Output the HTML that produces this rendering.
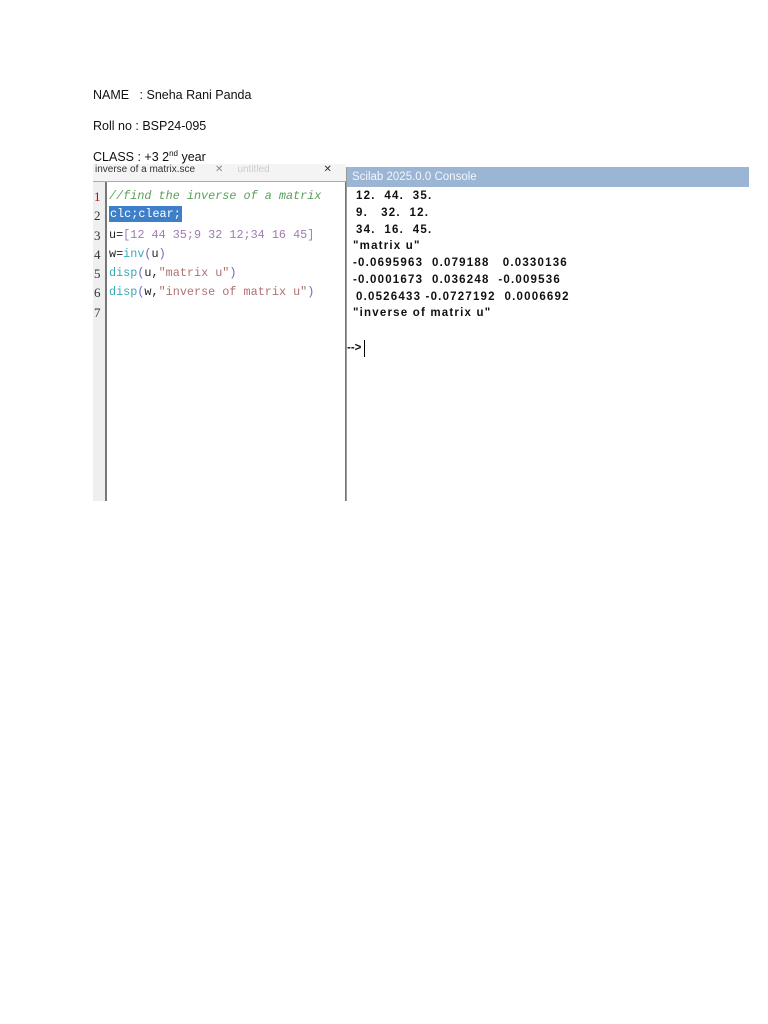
<!DOCTYPE html>
<html><head><meta charset="utf-8"><style>
body{margin:0;width:768px;height:1024px;background:#fff;position:relative;overflow:hidden;font-family:"Liberation Sans",sans-serif;}
.t{position:absolute;left:93px;font-size:12.5px;color:#111;}
.ed{position:absolute;left:93px;top:164px;width:253px;height:337px;background:#fff;}
.tabs{position:absolute;left:0;top:0;width:253px;height:17px;background:#f4f4f4;border-bottom:1px solid #aaa;font-size:10px;color:#333;overflow:hidden;white-space:nowrap;}
.gut{position:absolute;left:0;top:18px;width:12px;height:319px;background:#efefef;border-right:2px solid #777;}
.ln{position:absolute;left:1px;font-family:"Liberation Serif",serif;font-size:13px;color:#333;}
.code{position:absolute;left:16px;font-family:"Liberation Mono",monospace;font-size:11.8px;white-space:pre;color:#222;}
.rb{position:absolute;left:252px;top:18px;width:2px;height:319px;background:#777;}
.con{position:absolute;left:346px;top:167px;width:402px;height:334px;border-left:1px solid #999;}
.ch{height:20px;background:#9bb5d5;color:#f4f6fa;font-size:11.5px;line-height:20px;padding-left:5px;}
.co{position:absolute;left:6px;font-size:11.5px;letter-spacing:1.2px;font-weight:bold;color:#111;white-space:pre;}
</style></head><body>
<div class="t" style="top:88px">NAME&nbsp;&nbsp; : Sneha Rani Panda</div>
<div class="t" style="top:119px">Roll no : BSP24-095</div>
<div class="t" style="top:149px">CLASS : +3 2<sup style="font-size:8px">nd</sup> year</div>

<div class="ed">
<div class="tabs"><span style="margin-left:2px;">inverse of a matrix.sce</span><span style="margin-left:20px;color:#888">&#x2715;</span><span style="display:inline-block;width:70px;margin-left:14px;color:#ccc">untitled</span><span style="margin-left:16px">&#x2715;</span></div>
<div class="gut"></div>
<div class="rb"></div>
<div class="ln" style="top:25px;color:#c00">1</div>
<div class="ln" style="top:44px">2</div>
<div class="ln" style="top:64px">3</div>
<div class="ln" style="top:83px">4</div>
<div class="ln" style="top:102px">5</div>
<div class="ln" style="top:121px">6</div>
<div class="ln" style="top:141px">7</div>
<div class="code" style="top:25px;color:#5aa05a;font-style:italic">//find the inverse of a matrix</div>
<div class="code" style="top:42px;background:#3d7fc9;color:#fff;padding:1px 1px;">clc;clear;</div>
<div class="code" style="top:64px">u=<span style="color:#a07bb0">[12 44 35;9 32 12;34 16 45]</span></div>
<div class="code" style="top:83px">w=<span style="color:#3aa8b8">inv</span><span style="color:#6a6ac0">(</span>u<span style="color:#6a6ac0">)</span></div>
<div class="code" style="top:102px"><span style="color:#3aa8b8">disp</span><span style="color:#6a6ac0">(</span>u,<span style="color:#b07070">"matrix u"</span><span style="color:#6a6ac0">)</span></div>
<div class="code" style="top:121px"><span style="color:#3aa8b8">disp</span><span style="color:#6a6ac0">(</span>w,<span style="color:#b07070">"inverse of matrix u"</span><span style="color:#6a6ac0">)</span></div>
</div>

<div class="con">
<div class="ch">Scilab 2025.0.0 Console</div>
<div class="co" style="top:23px;left:9px">12.  44.  35.</div>
<div class="co" style="top:40px;left:9px">9.   32.  12.</div>
<div class="co" style="top:57px;left:9px">34.  16.  45.</div>
<div class="co" style="top:73px">"matrix u"</div>
<div class="co" style="top:90px">-0.0695963  0.079188   0.0330136</div>
<div class="co" style="top:107px">-0.0001673  0.036248  -0.009536</div>
<div class="co" style="top:124px;left:9px">0.0526433 -0.0727192  0.0006692</div>
<div class="co" style="top:140px">"inverse of matrix u"</div>
<div class="co" style="top:175px;left:0;letter-spacing:0">--&gt;</div>
<div style="position:absolute;left:17px;top:173px;width:1px;height:17px;background:#000"></div>
</div>
</body></html>
